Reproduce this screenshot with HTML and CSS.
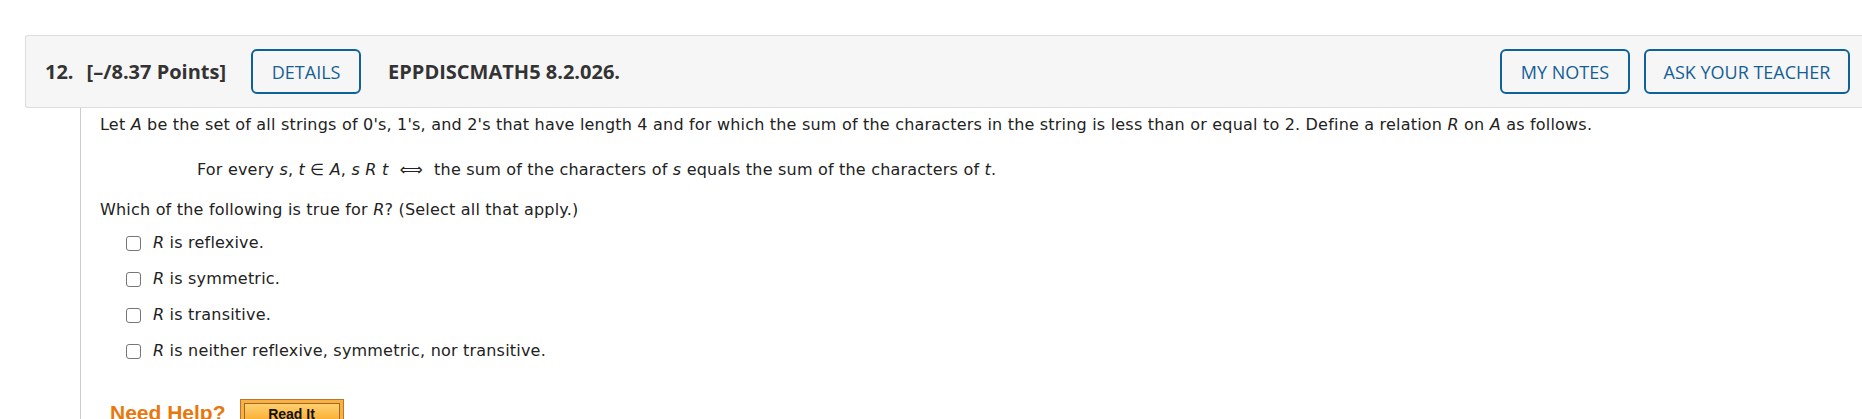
FILE: index.html
```html
<!DOCTYPE html>
<html>
<head>
<meta charset="utf-8">
<link rel="stylesheet" href="styles.css">
</head>
<body>
<div class="question">
  <div class="q-header">
    <span class="q-num">12.</span>
    <span class="q-points">[–/8.37 Points]</span>
    <button class="btn btn-details">DETAILS</button>
    <span class="q-ref">EPPDISCMATH5 8.2.026.</span>
    <div class="q-actions">
      <button class="btn btn-notes">MY NOTES</button>
      <button class="btn btn-ask">ASK YOUR TEACHER</button>
    </div>
  </div>
  <div class="q-body">
    <p class="q-text">Let <i>A</i> be the set of all strings of 0's, 1's, and 2's that have length 4 and for which the sum of the characters in the string is less than or equal to 2. Define a relation <i>R</i> on <i>A</i> as follows.</p>
    <p class="q-def">For every <i>s</i>, <i>t</i> ∈ <i>A</i>, <i>s</i> <i>R</i> <i>t</i> <span class="iff">⟺</span> the sum of the characters of <i>s</i> equals the sum of the characters of <i>t</i>.</p>
    <p class="q-prompt">Which of the following is true for <i>R</i>? (Select all that apply.)</p>
    <ul class="options">
      <li><span class="cb"></span><span><i>R</i> is reflexive.</span></li>
      <li><span class="cb"></span><span><i>R</i> is symmetric.</span></li>
      <li><span class="cb"></span><span><i>R</i> is transitive.</span></li>
      <li><span class="cb"></span><span><i>R</i> is neither reflexive, symmetric, nor transitive.</span></li>
    </ul>
    <div class="help">
      <span class="help-label">Need Help?</span>
      <span class="read-it"><span class="read-it-inner">Read It</span></span>
    </div>
  </div>
</div>
</body>
</html>
```

FILE: styles.css
```css
html, body {
  margin: 0;
  padding: 0;
  background: #ffffff;
  overflow: hidden;
}

.question {
  padding-top: 35px;
  padding-left: 25px;
}

.q-header {
  display: flex;
  align-items: center;
  height: 71px;
  background: #f6f6f6;
  border: 1px solid #dddddd;
  border-right: none;
  border-radius: 3px 0 0 3px;
  padding-left: 19px;
  padding-right: 12px;
  font-family: "Open Sans", "Liberation Sans", sans-serif;
  color: #333333;
}

.q-num {
  font-size: 20px;
  font-weight: 700;
  margin-right: 13px;
}

.q-points {
  font-size: 20px;
  font-weight: 700;
  margin-right: 25px;
}

.q-ref {
  font-size: 20px;
  font-weight: 700;
  margin-left: 27px;
}

.btn {
  font-family: "Open Sans", "Liberation Sans", sans-serif;
  font-size: 18px;
  color: #155f97;
  background: transparent;
  border: 2px solid #0f6299;
  border-radius: 6px;
  height: 45px;
  padding: 0;
  cursor: pointer;
}

.btn-details {
  width: 110px;
}

.q-actions {
  margin-left: auto;
  display: flex;
  gap: 14px;
}

.btn-notes {
  width: 130px;
}

.btn-ask {
  width: 206px;
}

.q-body {
  margin-left: 55px;
  border-left: 1px solid #cccccc;
  padding-left: 19px;
  padding-top: 7px;
  font-family: "DejaVu Sans", Verdana, sans-serif;
  font-size: 16px;
  letter-spacing: 0.2px;
  color: #222222;
}

.q-body p {
  margin: 0;
  line-height: 20px;
}

.q-def {
  margin-top: 25px !important;
  padding-left: 97px;
}

.iff {
  display: inline-block;
  margin: 0 6px;
}

.q-prompt {
  margin-top: 20px !important;
}

.options {
  list-style: none;
  margin: 0;
  padding: 5px 0 0 26px;
}

.options li {
  display: flex;
  align-items: center;
  gap: 12px;
  height: 36px;
  line-height: 20px;
}

.cb {
  display: inline-block;
  width: 13px;
  height: 13px;
  border: 1px solid #767676;
  border-radius: 3px;
  background: #ffffff;
}

.help {
  display: flex;
  align-items: flex-start;
  margin-top: 30px;
  padding-left: 10px;
  gap: 14px;
  letter-spacing: 0;
}

.help-label {
  font-family: "Liberation Sans", Arial, sans-serif;
  font-weight: 700;
  font-size: 21px;
  color: #e8780e;
  padding-top: 2px;
}

.read-it {
  display: inline-block;
  border: 1px solid #b7772e;
  padding: 3px;
  background: #fbb040;
}

.read-it-inner {
  display: inline-block;
  width: 94px;
  border: 1px solid #9a6a2a;
  text-align: center;
  font-family: "Liberation Sans", Arial, sans-serif;
  font-weight: 700;
  font-size: 14px;
  color: #111111;
  background: linear-gradient(#ffd070, #f9a825);
  padding: 2px 0;
}
```
